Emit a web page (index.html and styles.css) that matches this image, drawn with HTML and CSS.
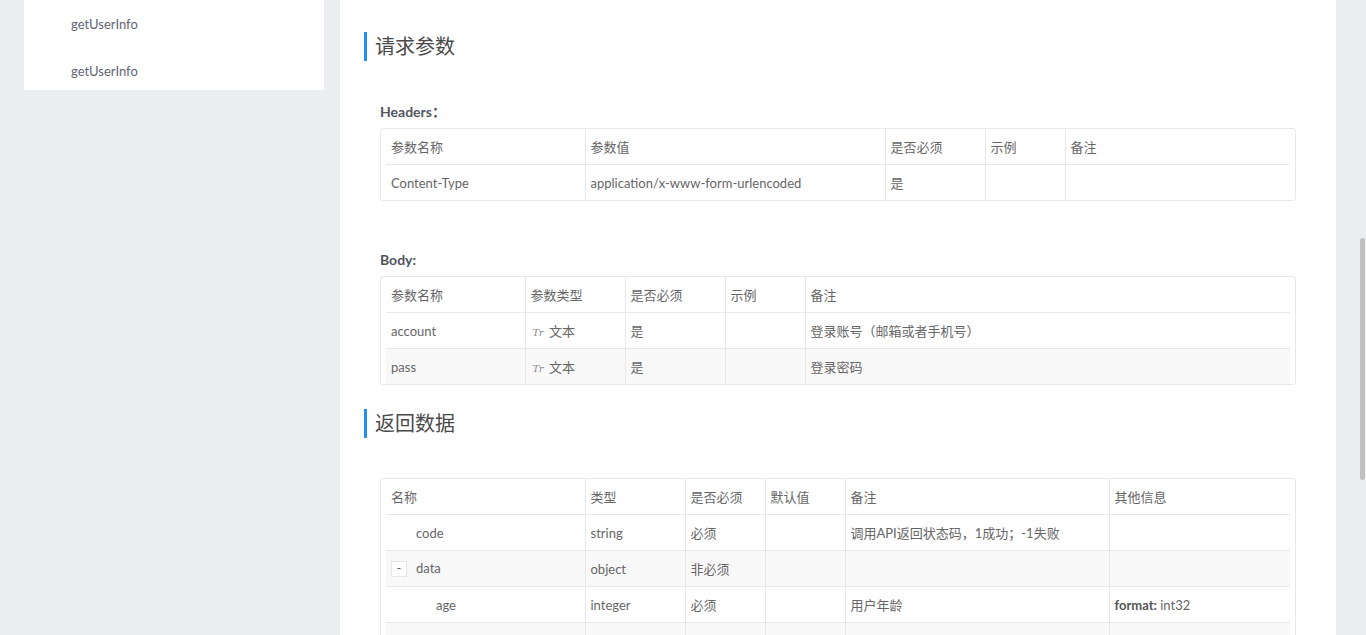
FILE: index.html
```html
<!DOCTYPE html>
<html lang="zh-CN">
<head>
<meta charset="utf-8">
<title>API 文档</title>
<link rel="stylesheet" href="styles.css">
</head>
<body>
<div class="layout">
  <aside class="sidebar">
    <div class="nav-item">getUserInfo</div>
    <div class="nav-item">getUserInfo</div>
  </aside>
  <main class="content">
    <h2 class="section-title">请求参数</h2>

    <div class="sub-label">Headers：</div>
    <div class="table-box">
      <table class="grid">
        <colgroup><col style="width:199px"><col style="width:300px"><col style="width:100px"><col style="width:80px"><col></colgroup>
        <tr><td>参数名称</td><td>参数值</td><td>是否必须</td><td>示例</td><td>备注</td></tr>
        <tr><td>Content-Type</td><td>application/x-www-form-urlencoded</td><td>是</td><td></td><td></td></tr>
      </table>
    </div>

    <div class="sub-label body-label">Body:</div>
    <div class="table-box">
      <table class="grid">
        <colgroup><col style="width:139px"><col style="width:100px"><col style="width:100px"><col style="width:80px"><col></colgroup>
        <tr><td>参数名称</td><td>参数类型</td><td>是否必须</td><td>示例</td><td>备注</td></tr>
        <tr><td>account</td><td><span class="tr-icon">Tr</span>文本</td><td>是</td><td></td><td>登录账号（邮箱或者手机号）</td></tr>
        <tr class="alt"><td>pass</td><td><span class="tr-icon">Tr</span>文本</td><td>是</td><td></td><td>登录密码</td></tr>
      </table>
    </div>

    <h2 class="section-title second">返回数据</h2>

    <div class="table-box return-box">
      <table class="grid">
        <colgroup><col style="width:199px"><col style="width:100px"><col style="width:80px"><col style="width:80px"><col style="width:264px"><col></colgroup>
        <tr><td>名称</td><td>类型</td><td>是否必须</td><td>默认值</td><td>备注</td><td>其他信息</td></tr>
        <tr><td><span class="lvl1">code</span></td><td>string</td><td>必须</td><td></td><td>调用API返回状态码，1成功；-1失败</td><td></td></tr>
        <tr class="alt"><td><span class="toggle">-</span>data</td><td>object</td><td>非必须</td><td></td><td></td><td></td></tr>
        <tr><td><span class="lvl2">age</span></td><td>integer</td><td>必须</td><td></td><td>用户年龄</td><td><b class="fmt">format:</b> int32</td></tr>
        <tr class="alt"><td></td><td></td><td></td><td></td><td></td><td></td></tr>
      </table>
    </div>
  </main>
</div>
<div class="scroll-thumb"></div>
</body>
</html>
```

FILE: styles.css
```css
html, body {
  margin: 0;
  padding: 0;
  height: 100%;
  overflow: hidden;
}
body {
  background: #ecedf1;
  font-family: Lato, "Noto Sans CJK SC", sans-serif;
  color: #666;
  font-size: 13px;
}
.layout {
  display: flex;
  align-items: flex-start;
  gap: 16px;
  padding-left: 24px;
}
.sidebar {
  width: 300px;
  background: #fff;
  display: flex;
  flex-direction: column;
  gap: 9px;
  padding-top: 5px;
}
.nav-item {
  height: 38px;
  line-height: 38px;
  padding-left: 47px;
  color: #5f6573;
  font-size: 13px;
}
.content {
  width: 996px;
  min-height: 700px;
  background: #fff;
  padding: 32px 40px 0 24px;
  box-sizing: border-box;
}
.section-title {
  margin: 0;
  border-left: 3px solid #1f8ff0;
  padding-left: 8px;
  height: 29px;
  line-height: 29px;
  font-size: 20px;
  font-weight: normal;
  color: #4a4a4a;
}
.section-title.second {
  margin-top: 24px;
}
.sub-label {
  margin: 40px 0 5px 16px;
  height: 22px;
  line-height: 22px;
  font-size: 14px;
  font-weight: 700;
  color: #50555e;
}
.sub-label.body-label {
  margin-top: 48px;
}
.table-box {
  margin-left: 16px;
  border: 1px solid #e8e8e8;
  border-radius: 3px;
  padding: 0 5px;
}
.return-box {
  margin-top: 40px;
}
.grid {
  width: 100%;
  border-collapse: collapse;
  table-layout: fixed;
}
.grid td {
  height: 35px;
  padding: 0 5px;
  border-right: 1px solid #e8e8e8;
  border-bottom: 1px solid #e8e8e8;
  white-space: nowrap;
  color: #666;
  vertical-align: middle;
}
.grid td:last-child {
  border-right: none;
}
.grid tr:last-child td {
  border-bottom: none;
}
.grid tr.alt td {
  background: #f8f8f8;
}
.tr-icon {
  display: inline-block;
  font-family: "DejaVu Serif", serif;
  font-style: italic;
  font-size: 10px;
  color: #8a8a8a;
  margin: 0 6px 0 2px;
  letter-spacing: -0.5px;
}
.lvl1 {
  padding-left: 25px;
}
.lvl2 {
  padding-left: 45px;
}
.toggle {
  display: inline-block;
  width: 14px;
  height: 14px;
  border: 1px solid #e6e6e6;
  background: #fff;
  line-height: 13px;
  text-align: center;
  margin-right: 9px;
  vertical-align: middle;
  position: relative;
  top: 0;
  color: #666;
}
.fmt {
  color: #555;
  font-weight: 700;
}
.scroll-thumb {
  position: fixed;
  right: 1px;
  top: 238px;
  width: 5px;
  height: 242px;
  border-radius: 3px;
  background: #c1c1c1;
}
```
